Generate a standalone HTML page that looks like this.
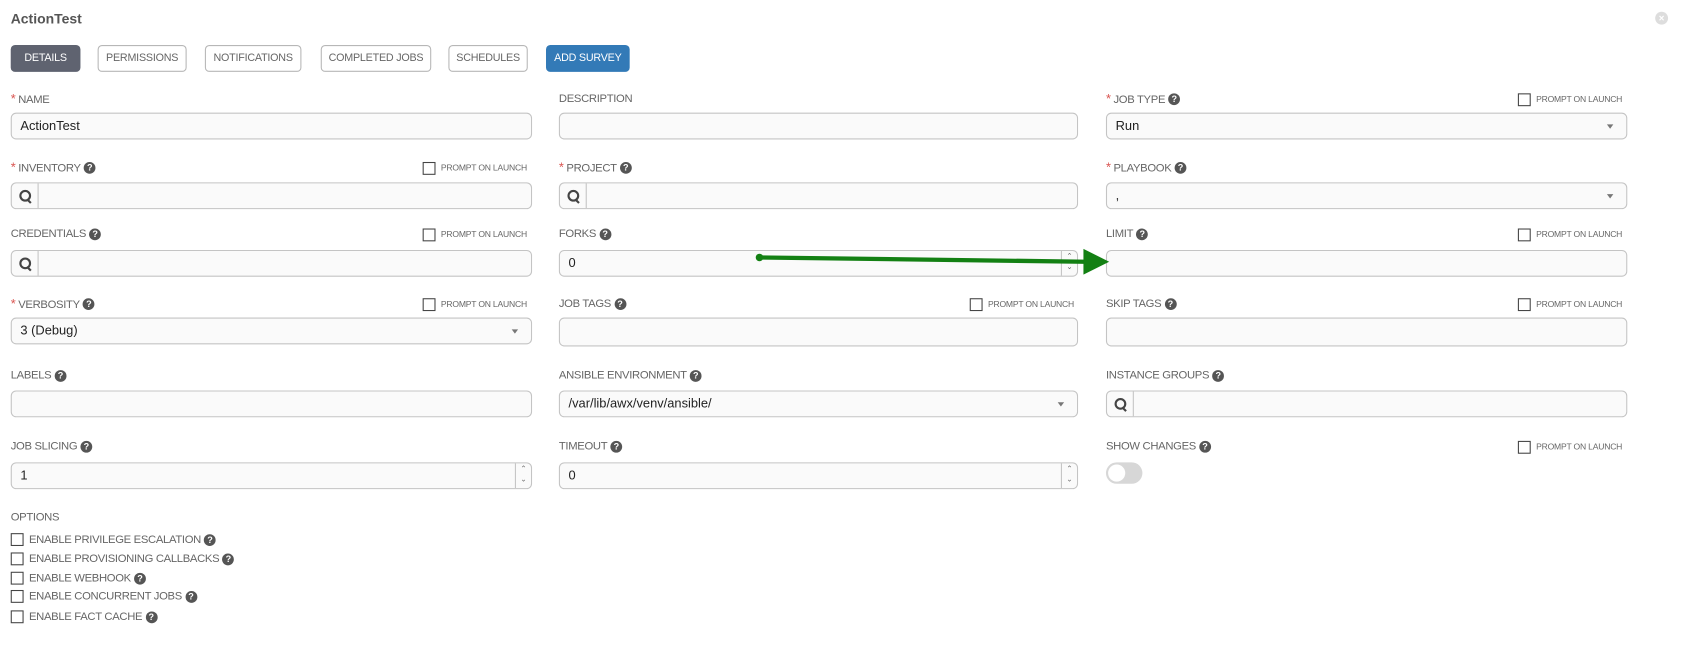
<!DOCTYPE html>
<html><head><meta charset="utf-8"><style>
*{box-sizing:border-box;margin:0;padding:0}
html,body{width:1682px;height:649px;background:#fff;overflow:hidden}
body{font-family:"Liberation Sans",sans-serif;color:#606060;position:relative}
#w{position:absolute;left:0;top:0;width:1568px;height:605px;transform:scale(1.0727);transform-origin:0 0}
.a{position:absolute}
.title{left:10px;top:10px;font-size:13px;font-weight:bold;color:#555}
.tab{position:absolute;top:42px;height:25px;border:1px solid #b7b7b7;border-radius:4px;font-size:10px;color:#666;display:flex;align-items:center;justify-content:center;background:#fff;letter-spacing:-0.2px}
.lbl{position:absolute;font-size:10.5px;line-height:13px;color:#666;letter-spacing:-0.3px;white-space:nowrap}
.lbl .s{color:#d9534f;font-size:12px;line-height:13px}
.q{display:inline-block;width:11px;height:11px;border-radius:50%;background:#555;color:#fff;font-size:8.5px;font-weight:bold;text-align:center;line-height:11px;vertical-align:top;margin-top:1px;margin-left:3px;letter-spacing:0}
.pol{position:absolute;font-size:8px;color:#666;white-space:nowrap;letter-spacing:-0.2px}
.pol i{display:inline-block;width:12px;height:12px;border:1px solid #444;vertical-align:-4px;margin-right:5px}
.in{position:absolute;height:25px;border:1px solid #c4c4c4;border-radius:5px;background:#fafafa;font-size:12px;color:#222;padding-left:8px;line-height:23px}
.sel::after{content:"";position:absolute;right:12px;top:10px;border-left:3px solid transparent;border-right:3px solid transparent;border-top:4px solid #777}
.srch{padding-left:0}
.srch b{display:inline-block;width:25px;height:23px;border-right:1px solid #c4c4c4;vertical-align:top;position:relative}
.srch b::before{content:"";position:absolute;left:7px;top:6px;width:7px;height:7px;border:2px solid #444;border-radius:50%}
.srch b::after{content:"";position:absolute;left:15px;top:14px;width:2px;height:5px;background:#444;transform:rotate(-45deg)}
.spin::after{content:"";position:absolute;right:0;top:0;width:14px;height:23px;border-left:1px solid #c4c4c4}
.spin span.u,.spin span.d{position:absolute;right:4px;font-size:7px;color:#666;line-height:8px}
.opt{position:absolute;left:10px;font-size:10.5px;line-height:13px;color:#666;white-space:nowrap;letter-spacing:-0.3px}
.opt i{display:inline-block;width:12px;height:12px;border:1px solid #444;vertical-align:top;margin-right:5px}
</style></head><body><div id="w">
<div class="a title">ActionTest</div>
<div class="a" style="left:1543px;top:11px;width:12px;height:12px;border-radius:50%;background:#ddd;color:#fff;font-size:9px;text-align:center;line-height:12px;font-weight:bold">×</div>

<div class="tab" style="left:10px;width:65px;background:#5f6370;border-color:#5f6370;color:#fff">DETAILS</div>
<div class="tab" style="left:91px;width:83px">PERMISSIONS</div>
<div class="tab" style="left:191px;width:90px">NOTIFICATIONS</div>
<div class="tab" style="left:299px;width:103px">COMPLETED JOBS</div>
<div class="tab" style="left:418px;width:74px">SCHEDULES</div>
<div class="tab" style="left:509px;width:78px;background:#337ab7;border-color:#337ab7;color:#fff">ADD SURVEY</div>

<div class="lbl" style="left:10px;top:86px"><span class="s">*</span> NAME</div>
<div class="in" style="left:10px;top:105px;width:486px">ActionTest</div>
<div class="lbl" style="left:521px;top:86px">DESCRIPTION</div>
<div class="in" style="left:521px;top:105px;width:484px"></div>
<div class="lbl" style="left:1031px;top:86px"><span class="s">*</span> JOB TYPE<span class="q">?</span></div>
<div class="pol" style="left:1415px;top:87px"><i></i>PROMPT ON LAUNCH</div>
<div class="in sel" style="left:1031px;top:105px;width:486px">Run</div>

<div class="lbl" style="left:10px;top:150px"><span class="s">*</span> INVENTORY<span class="q">?</span></div>
<div class="pol" style="left:394px;top:151px"><i></i>PROMPT ON LAUNCH</div>
<div class="in srch" style="left:10px;top:170px;width:486px"><b></b></div>
<div class="lbl" style="left:521px;top:150px"><span class="s">*</span> PROJECT<span class="q">?</span></div>
<div class="in srch" style="left:521px;top:170px;width:484px"><b></b></div>
<div class="lbl" style="left:1031px;top:150px"><span class="s">*</span> PLAYBOOK<span class="q">?</span></div>
<div class="in sel" style="left:1031px;top:170px;width:486px">,</div>

<div class="lbl" style="left:10px;top:212px">CREDENTIALS<span class="q">?</span></div>
<div class="pol" style="left:394px;top:213px"><i></i>PROMPT ON LAUNCH</div>
<div class="in srch" style="left:10px;top:233px;width:486px"><b></b></div>
<div class="lbl" style="left:521px;top:212px">FORKS<span class="q">?</span></div>
<div class="in spin" style="left:521px;top:233px;width:484px">0<span class="u" style="top:2px">⌃</span><span class="d" style="top:12px">⌄</span></div>
<div class="lbl" style="left:1031px;top:212px">LIMIT<span class="q">?</span></div>
<div class="pol" style="left:1415px;top:213px"><i></i>PROMPT ON LAUNCH</div>
<div class="in" style="left:1031px;top:233px;width:486px"></div>

<div class="lbl" style="left:10px;top:277px"><span class="s">*</span> VERBOSITY<span class="q">?</span></div>
<div class="pol" style="left:394px;top:278px"><i></i>PROMPT ON LAUNCH</div>
<div class="in sel" style="left:10px;top:296px;width:486px">3 (Debug)</div>
<div class="lbl" style="left:521px;top:277px">JOB TAGS<span class="q">?</span></div>
<div class="pol" style="left:904px;top:278px"><i></i>PROMPT ON LAUNCH</div>
<div class="in" style="left:521px;top:296px;width:484px;height:27px"></div>
<div class="lbl" style="left:1031px;top:277px">SKIP TAGS<span class="q">?</span></div>
<div class="pol" style="left:1415px;top:278px"><i></i>PROMPT ON LAUNCH</div>
<div class="in" style="left:1031px;top:296px;width:486px;height:27px"></div>

<div class="lbl" style="left:10px;top:344px">LABELS<span class="q">?</span></div>
<div class="in" style="left:10px;top:364px;width:486px"></div>
<div class="lbl" style="left:521px;top:344px">ANSIBLE ENVIRONMENT<span class="q">?</span></div>
<div class="in sel" style="left:521px;top:364px;width:484px">/var/lib/awx/venv/ansible/</div>
<div class="lbl" style="left:1031px;top:344px">INSTANCE GROUPS<span class="q">?</span></div>
<div class="in srch" style="left:1031px;top:364px;width:486px"><b></b></div>

<div class="lbl" style="left:10px;top:410px">JOB SLICING<span class="q">?</span></div>
<div class="in spin" style="left:10px;top:431px;width:486px">1<span class="u" style="top:2px">⌃</span><span class="d" style="top:12px">⌄</span></div>
<div class="lbl" style="left:521px;top:410px">TIMEOUT<span class="q">?</span></div>
<div class="in spin" style="left:521px;top:431px;width:484px">0<span class="u" style="top:2px">⌃</span><span class="d" style="top:12px">⌄</span></div>
<div class="lbl" style="left:1031px;top:410px">SHOW CHANGES<span class="q">?</span></div>
<div class="pol" style="left:1415px;top:411px"><i></i>PROMPT ON LAUNCH</div>
<div class="a" style="left:1031px;top:431px;width:34px;height:20px;border-radius:10px;background:#d7d7d7"><div class="a" style="left:2px;top:2px;width:16px;height:16px;border-radius:50%;background:#fff"></div></div>

<div class="lbl" style="left:10px;top:476px">OPTIONS</div>
<div class="opt" style="top:497px"><i></i>ENABLE PRIVILEGE ESCALATION<span class="q">?</span></div>
<div class="opt" style="top:515px"><i></i>ENABLE PROVISIONING CALLBACKS<span class="q">?</span></div>
<div class="opt" style="top:533px"><i></i>ENABLE WEBHOOK<span class="q">?</span></div>
<div class="opt" style="top:550px"><i></i>ENABLE CONCURRENT JOBS<span class="q">?</span></div>
<div class="opt" style="top:569px"><i></i>ENABLE FACT CACHE<span class="q">?</span></div>

<svg class="a" style="left:0;top:0" width="1568" height="605">
<line x1="708" y1="240" x2="1012" y2="244" stroke="#138013" stroke-width="4"/>
<circle cx="708" cy="240" r="3.5" fill="#138013"/>
<polygon points="1010,232 1034,244 1010,256" fill="#138013"/>
</svg>
</div></body></html>
